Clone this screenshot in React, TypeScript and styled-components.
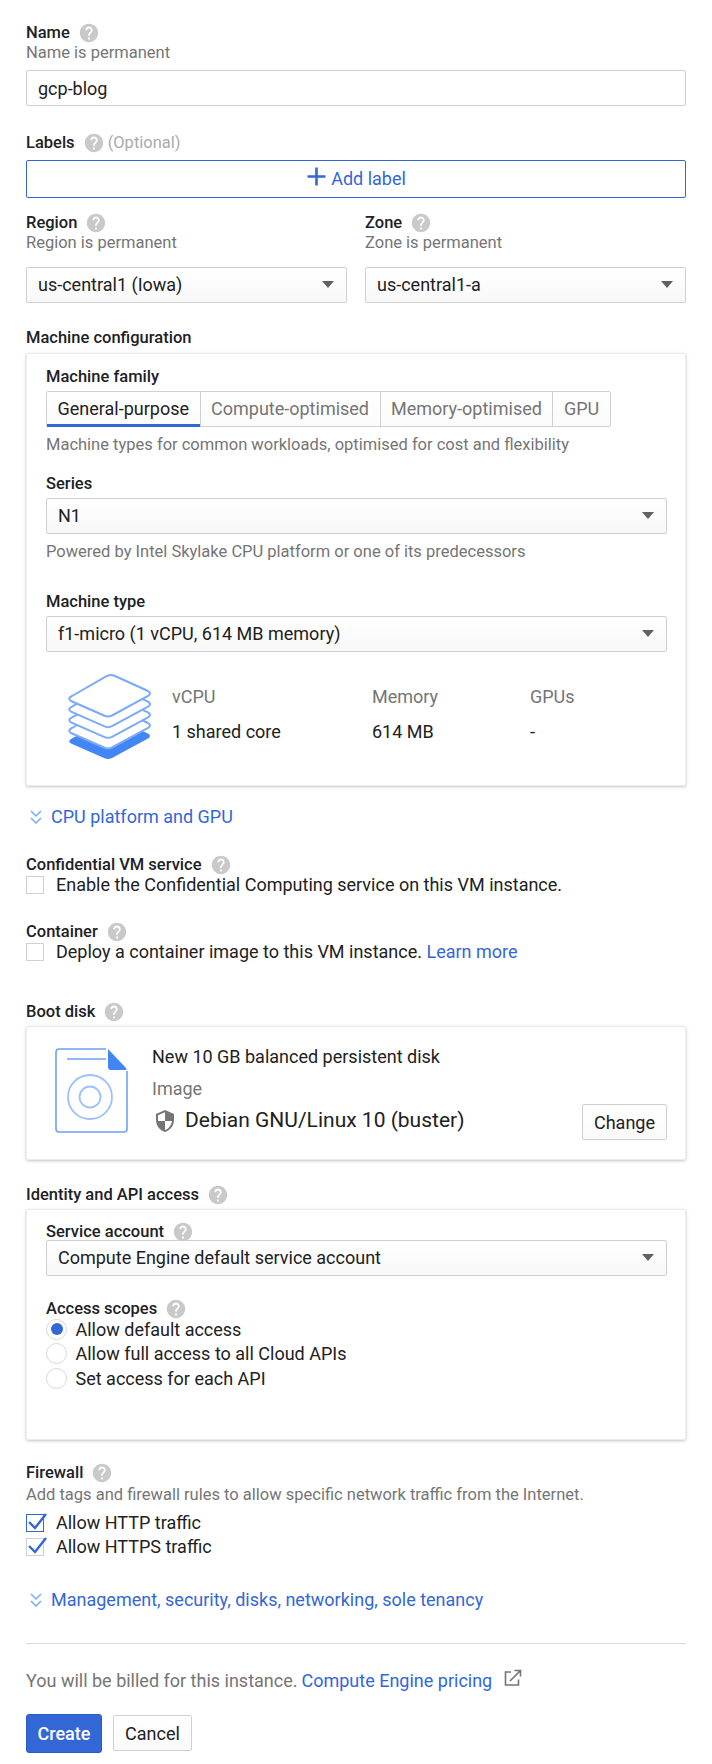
import React from 'react';
import styled, { createGlobalStyle } from 'styled-components';

const GlobalStyle = createGlobalStyle`
  html, body {
    margin: 0;
    padding: 0;
    background: #fff;
  }
  body {
    font-family: Roboto, "Liberation Sans", Arial, sans-serif;
    font-size: 18px;
    color: #212121;
  }
  * {
    box-sizing: border-box;
  }
`;

const Page = styled.main`
  width: 712px;
  height: 1764px;
  padding: 22px 26px 0 26px;
  overflow: hidden;
`;

const FieldLabel = styled.div<{ $top?: number }>`
  display: flex;
  align-items: center;
  height: 20px;
  margin-top: ${(p) => p.$top ?? 0}px;
  padding-top: 1px;
  font-size: 16.5px;
  font-weight: 500;
  line-height: 20px;
  color: #202124;
  white-space: nowrap;
`;

const HelpMark = styled.svg`
  width: 22px;
  height: 22px;
  margin-left: 8px;
  fill: #c9c9c9;
  flex: none;
`;

const Optional = styled.span`
  margin-left: 3px;
  font-weight: 400;
  color: #aaa;
`;

const Hint = styled.div<{ $top?: number }>`
  height: 20px;
  margin-top: ${(p) => p.$top ?? 1}px;
  font-size: 16.5px;
  line-height: 20px;
  color: #757575;
  white-space: nowrap;
`;

const TextInput = styled.input`
  display: block;
  width: 100%;
  height: 36px;
  margin-top: 7px;
  padding: 0 11px;
  border: 1px solid #d0d0d0;
  border-radius: 2px;
  background: #fff;
  font: inherit;
  color: #212121;
  outline: none;
`;

const AddLabel = styled.button`
  display: flex;
  align-items: center;
  justify-content: center;
  gap: 4px;
  width: 100%;
  height: 38px;
  margin-top: 8px;
  padding: 0 0 2px;
  border: 1px solid #3367d6;
  border-radius: 2px;
  background: #fff;
  font: inherit;
  color: #3367d6;
`;

const PlusIcon = styled.svg`
  width: 21px;
  height: 21px;
  stroke: #3367d6;
  stroke-width: 2.6;
  fill: none;
  margin-top: -3px;
`;

const TwoColumns = styled.div`
  display: grid;
  grid-template-columns: 321px 321px;
  column-gap: 18px;
  margin-top: 14px;
`;

const SelectBox = styled.div<{ $top?: number }>`
  display: flex;
  align-items: center;
  justify-content: space-between;
  height: 36px;
  margin-top: ${(p) => p.$top ?? 5}px;
  padding: 0 12px 2px 11px;
  border: 1px solid #d0d0d0;
  border-radius: 2px;
  background: linear-gradient(#fff, #f8f8f8);
  color: #212121;
  white-space: nowrap;

  &::after {
    content: '';
    width: 0;
    height: 0;
    border-left: 6px solid transparent;
    border-right: 6px solid transparent;
    border-top: 7px solid #616161;
  }
`;

const Card = styled.section<{ $top?: number; $pad: string }>`
  margin-top: ${(p) => p.$top ?? 5}px;
  padding: ${(p) => p.$pad};
  border: 1px solid #ececec;
  border-radius: 2px;
  background: #fff;
  box-shadow: 0 1px 3px rgba(60, 64, 67, 0.3);
`;

const Tabs = styled.div`
  display: inline-flex;
  height: 36px;
  margin-top: 5px;
  border: 1px solid #d0d0d0;
  border-radius: 2px;
  background: linear-gradient(#fff, #fbfbfb);
`;

const Tab = styled.div<{ $active?: boolean }>`
  display: flex;
  align-items: center;
  padding: ${(p) => (p.$active ? '0 10.5px 0' : '0 10.5px 2px')};
  margin-bottom: -1px;
  border-left: ${(p) => (p.$active ? '0' : '1px solid #d0d0d0')};
  border-bottom: ${(p) => (p.$active ? '3px solid #3367d6' : '1px solid transparent')};
  color: ${(p) => (p.$active ? '#212121' : '#757575')};
  white-space: nowrap;
`;

const Specs = styled.div`
  display: flex;
  margin: 21px 0 0 21px;
`;

const StackIcon = styled.svg`
  width: 85px;
  height: 88px;
  flex: none;
`;

const SpecGrid = styled.div`
  display: grid;
  grid-template-columns: 200px 158px auto;
  grid-auto-rows: 20px;
  row-gap: 15px;
  margin: 14px 0 0 20px;
  line-height: 20px;
`;

const SpecHead = styled.div`
  color: #757575;
`;

const ExpandLink = styled.a<{ $top: number }>`
  display: flex;
  align-items: center;
  gap: 9px;
  height: 20px;
  margin-top: ${(p) => p.$top}px;
  padding: 0 0 2px 4px;
  color: #3367d6;
  text-decoration: none;
`;

const Chevrons = styled.svg`
  width: 12px;
  height: 14px;
  margin-top: 1px;
  fill: none;
  stroke: #7baaf7;
  stroke-width: 1.5;
`;

const CheckRow = styled.label<{ $top?: number }>`
  display: flex;
  align-items: flex-start;
  gap: 12px;
  height: 20px;
  margin-top: ${(p) => p.$top ?? 1}px;
  line-height: 19px;
  color: #212121;
  white-space: nowrap;
`;

const CheckBox = styled.span<{ $focus?: boolean }>`
  position: relative;
  display: block;
  width: 18px;
  height: 18px;
  margin-top: 1px;
  flex: none;
  border: 1px solid ${(p) => (p.$focus ? '#3367d6' : '#d0d0d0')};
  background: #fff;

  svg {
    position: absolute;
    left: -1px;
    top: -2px;
    width: 22px;
    height: 18px;
    fill: none;
    stroke: #3367d6;
    stroke-width: 2.4;
    overflow: visible;
  }
`;

const TextLink = styled.a`
  color: #3367d6;
  text-decoration: none;
`;

const DiskRow = styled.div`
  display: flex;
  align-items: flex-start;
`;

const DiskIcon = styled.svg`
  width: 73px;
  height: 85px;
  margin-top: 1px;
  flex: none;
`;

const DiskInfo = styled.div`
  flex: 1;
  margin-left: 24px;
  line-height: 20px;
`;

const DiskHead = styled.div`
  color: #757575;
  margin-top: 12px;
`;

const ImageRow = styled.div`
  display: flex;
  align-items: center;
  height: 24px;
  margin-top: 9px;
  font-size: 21px;
  color: #212121;
`;

const ShieldIcon = styled.svg`
  width: 24px;
  height: 24px;
  margin: 2px 8px 0 1px;
  fill: #757575;
  flex: none;
`;

const PlainButton = styled.button`
  height: 36px;
  padding: 0;
  border: 1px solid #d0d0d0;
  border-radius: 2px;
  background: linear-gradient(#fff, #fafafa);
  font: inherit;
  color: #212121;
`;

const ChangeButton = styled(PlainButton)`
  width: 85px;
  margin-top: 57px;
  flex: none;
`;

const RadioGroup = styled.div`
  display: flex;
  flex-direction: column;
  gap: 4.5px;
  margin-top: 1px;
`;

const RadioRow = styled.label`
  display: flex;
  align-items: center;
  gap: 8.5px;
  height: 20px;
  color: #212121;
`;

const RadioMark = styled.span<{ $on?: boolean }>`
  display: flex;
  align-items: center;
  justify-content: center;
  width: 21px;
  height: 21px;
  flex: none;
  border: 1px solid #d8d8d8;
  border-radius: 50%;
  background: #fff;

  &::after {
    content: '';
    display: ${(p) => (p.$on ? 'block' : 'none')};
    width: 12px;
    height: 12px;
    border-radius: 50%;
    background: #3367d6;
  }
`;

const Divider = styled.hr`
  height: 1px;
  margin: 33px 0 0;
  border: 0;
  background: #d9d9d9;
`;

const BillingLine = styled.div`
  display: flex;
  align-items: center;
  height: 20px;
  margin-top: 26px;
  color: #757575;
  white-space: nowrap;

  a {
    margin-left: 4px;
  }
`;

const ExternalIcon = styled.svg`
  width: 18px;
  height: 18px;
  margin: -4px 0 0 12px;
  fill: none;
  stroke: #757575;
  stroke-width: 1.6;
`;

const Actions = styled.div`
  display: flex;
  align-items: flex-start;
  gap: 11px;
  margin-top: 24px;
`;

const CreateButton = styled.button`
  width: 76px;
  height: 39px;
  padding: 0;
  border: 1px solid #2a5ac4;
  border-radius: 3px;
  background: #3367d6;
  font: inherit;
  font-weight: 500;
  color: #fff;
`;

const CancelButton = styled(PlainButton)`
  width: 79px;
  margin-top: 1px;
`;

const Help = () => (
  <HelpMark viewBox="0 0 24 24">
    <path d="M12 2C6.48 2 2 6.48 2 12s4.48 10 10 10 10-4.48 10-10S17.52 2 12 2zm1 17h-2v-2h2v2zm2.07-7.75l-.9.92C13.45 12.9 13 13.5 13 15h-2v-.5c0-1.1.45-2.1 1.17-2.83l1.24-1.26c.37-.36.59-.86.59-1.41 0-1.1-.9-2-2-2s-2 .9-2 2H8c0-2.21 1.79-4 4-4s4 1.79 4 4c0 .88-.36 1.68-.93 2.25z" />
  </HelpMark>
);

const DoubleChevron = () => (
  <Chevrons viewBox="0 0 12 14">
    <path d="M1 1l5 5 5-5M1 8l5 5 5-5" />
  </Chevrons>
);

const Tick = () => (
  <svg viewBox="0 0 22 18">
    <path d="M3 9l6 6L20 1" />
  </svg>
);

const LAYER = 'M5 23 L40 3 Q44 1 48 3 L81 18 Q85 20.5 81 23 L45 42.5 Q41 44.5 37 42.5 L4 28 Q0 25.5 5 23 Z';

const Stack = () => (
  <StackIcon viewBox="0 0 85 88">
    <path d={LAYER} transform="translate(0 42.5)" fill="#4285f4" />
    {[32, 21.3, 10.7, 0].map((y) => (
      <path key={y} d={LAYER} transform={`translate(0 ${y})`} fill="#fff" stroke="#7baaf7" strokeWidth="2" />
    ))}
  </StackIcon>
);

const Disk = () => (
  <DiskIcon viewBox="0 0 73 85">
    <path d="M51 1H4Q1 1 1 4V81Q1 84 4 84H69Q72 84 72 81V23" fill="none" stroke="#6ea0f6" strokeWidth="1.6" />
    <path d="M12 11H51" fill="none" stroke="#6ea0f6" strokeWidth="1.6" />
    <path d="M53 1L71 20Q72.5 22 70 22H56Q53 22 53 19Z" fill="#4285f4" />
    <circle cx="35" cy="49" r="22" fill="none" stroke="#9dc0fa" strokeWidth="1.8" />
    <circle cx="35" cy="49" r="10.5" fill="none" stroke="#9dc0fa" strokeWidth="1.8" />
  </DiskIcon>
);

export default function App() {
  return (
    <Page>
      <GlobalStyle />

      <FieldLabel>
        Name <Help />
      </FieldLabel>
      <Hint>Name is permanent</Hint>
      <TextInput defaultValue="gcp-blog" readOnly />

      <FieldLabel $top={26}>
        Labels <Help />
        <Optional>(Optional)</Optional>
      </FieldLabel>
      <AddLabel>
        <PlusIcon viewBox="0 0 21 21">
          <path d="M10.5 1.5v18M1.5 10.5h18" />
        </PlusIcon>
        Add label
      </AddLabel>

      <TwoColumns>
        <div>
          <FieldLabel>
            Region <Help />
          </FieldLabel>
          <Hint>Region is permanent</Hint>
          <SelectBox $top={14}>us-central1 (Iowa)</SelectBox>
        </div>
        <div>
          <FieldLabel>
            Zone <Help />
          </FieldLabel>
          <Hint>Zone is permanent</Hint>
          <SelectBox $top={14}>us-central1-a</SelectBox>
        </div>
      </TwoColumns>

      <FieldLabel $top={24}>Machine configuration</FieldLabel>
      <Card $top={6} $pad="12px 18px 24px 19px">
        <FieldLabel>Machine family</FieldLabel>
        <Tabs>
          <Tab $active>General-purpose</Tab>
          <Tab>Compute-optimised</Tab>
          <Tab>Memory-optimised</Tab>
          <Tab>GPU</Tab>
        </Tabs>
        <Hint $top={8}>Machine types for common workloads, optimised for cost and flexibility</Hint>
        <FieldLabel $top={18}>Series</FieldLabel>
        <SelectBox>N1</SelectBox>
        <Hint $top={8}>Powered by Intel Skylake CPU platform or one of its predecessors</Hint>
        <FieldLabel $top={29}>Machine type</FieldLabel>
        <SelectBox>f1-micro (1 vCPU, 614 MB memory)</SelectBox>
        <Specs>
          <Stack />
          <SpecGrid>
            <SpecHead>vCPU</SpecHead>
            <SpecHead>Memory</SpecHead>
            <SpecHead>GPUs</SpecHead>
            <div>1 shared core</div>
            <div>614 MB</div>
            <div>-</div>
          </SpecGrid>
        </Specs>
      </Card>

      <ExpandLink $top={21} href="#cpu">
        <DoubleChevron />
        CPU platform and GPU
      </ExpandLink>

      <FieldLabel $top={27}>
        Confidential VM service <Help />
      </FieldLabel>
      <CheckRow>
        <CheckBox />
        Enable the Confidential Computing service on this VM instance.
      </CheckRow>

      <FieldLabel $top={26}>
        Container <Help />
      </FieldLabel>
      <CheckRow>
        <CheckBox />
        <span>
          Deploy a container image to this VM instance. <TextLink href="#more">Learn more</TextLink>
        </span>
      </CheckRow>

      <FieldLabel $top={39}>
        Boot disk <Help />
      </FieldLabel>
      <Card $pad="20px 18px 19px 28px">
        <DiskRow>
          <Disk />
          <DiskInfo>
            <div>New 10 GB balanced persistent disk</div>
            <DiskHead>Image</DiskHead>
            <ImageRow>
              <ShieldIcon viewBox="0 0 24 24">
                <path d="M12 1L3 5v6c0 5.55 3.84 10.74 9 12 5.16-1.26 9-6.45 9-12V5l-9-4zm0 10.99h7c-.53 4.12-3.28 7.79-7 8.94V12H5V6.3l7-3.11v8.8z" />
              </ShieldIcon>
              Debian GNU/Linux 10 (buster)
            </ImageRow>
          </DiskInfo>
          <ChangeButton>Change</ChangeButton>
        </DiskRow>
      </Card>

      <FieldLabel $top={24}>
        Identity and API access <Help />
      </FieldLabel>
      <Card $pad="11px 18px 51px 19px">
        <FieldLabel>
          Service account <Help />
        </FieldLabel>
        <SelectBox $top={-1}>Compute Engine default service account</SelectBox>
        <FieldLabel $top={22}>
          Access scopes <Help />
        </FieldLabel>
        <RadioGroup>
          <RadioRow>
            <RadioMark $on />
            Allow default access
          </RadioRow>
          <RadioRow>
            <RadioMark />
            Allow full access to all Cloud APIs
          </RadioRow>
          <RadioRow>
            <RadioMark />
            Set access for each API
          </RadioRow>
        </RadioGroup>
      </Card>

      <FieldLabel $top={22}>
        Firewall <Help />
      </FieldLabel>
      <Hint $top={3}>Add tags and firewall rules to allow specific network traffic from the Internet.</Hint>
      <CheckRow $top={8}>
        <CheckBox $focus>
          <Tick />
        </CheckBox>
        Allow HTTP traffic
      </CheckRow>
      <CheckRow $top={4}>
        <CheckBox>
          <Tick />
        </CheckBox>
        Allow HTTPS traffic
      </CheckRow>

      <ExpandLink $top={33} href="#advanced">
        <DoubleChevron />
        Management, security, disks, networking, sole tenancy
      </ExpandLink>

      <Divider />

      <BillingLine>
        You will be billed for this instance.
        <TextLink href="#pricing">Compute Engine pricing</TextLink>
        <ExternalIcon viewBox="0 0 18 18">
          <path d="M7 3H1.5v13h13v-5.5M6 12L16.5 1.5M10.5 1.5h6v6" />
        </ExternalIcon>
      </BillingLine>

      <Actions>
        <CreateButton>Create</CreateButton>
        <CancelButton>Cancel</CancelButton>
      </Actions>
    </Page>
  );
}
